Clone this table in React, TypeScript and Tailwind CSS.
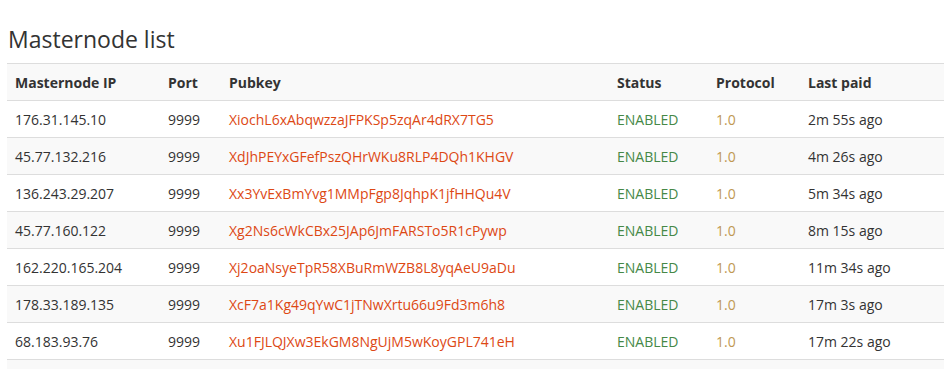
import React from "react";

const rows = [
  ["176.31.145.10", "9999", "XiochL6xAbqwzzaJFPKSp5zqAr4dRX7TG5", "2m 55s ago"],
  ["45.77.132.216", "9999", "XdJhPEYxGFefPszQHrWKu8RLP4DQh1KHGV", "4m 26s ago"],
  ["136.243.29.207", "9999", "Xx3YvExBmYvg1MMpFgp8JqhpK1jfHHQu4V", "5m 34s ago"],
  ["45.77.160.122", "9999", "Xg2Ns6cWkCBx25JAp6JmFARSTo5R1cPywp", "8m 15s ago"],
  ["162.220.165.204", "9999", "Xj2oaNsyeTpR58XBuRmWZB8L8yqAeU9aDu", "11m 34s ago"],
  ["178.33.189.135", "9999", "XcF7a1Kg49qYwC1jTNwXrtu66u9Fd3m6h8", "17m 3s ago"],
  ["68.183.93.76", "9999", "Xu1FJLQJXw3EkGM8NgUjM5wKoyGPL741eH", "17m 22s ago"],
];

export default function App() {
  return (
    <div
      className="w-[944px] h-[369px] overflow-hidden bg-white text-[#333] pl-[7px]"
      style={{ fontFamily: '"Open Sans", "Noto Sans", sans-serif' }}
    >
      <h1 className="text-[23px] leading-[28px] pt-[25px] pb-[10px] pl-[1px] font-normal text-[#333]">
        Masternode list
      </h1>
      <table className="w-full border-collapse text-[14px] border-t border-[#ddd]">
        <thead>
          <tr className="bg-[#f9f9f9] h-[37px] border-b border-[#ddd]">
            <th className="text-left font-bold px-2 w-[153px]">Masternode IP</th>
            <th className="text-left font-bold px-2 w-[61px]">Port</th>
            <th className="text-left font-bold px-2 w-[388px]">Pubkey</th>
            <th className="text-left font-bold px-2 w-[99px]">Status</th>
            <th className="text-left font-bold px-2 w-[92px]">Protocol</th>
            <th className="text-left font-bold px-2">Last paid</th>
          </tr>
        </thead>
        <tbody>
          {rows.map((r, i) => (
            <tr
              key={i}
              className={`h-[37px] border-b border-[#ddd] ${i % 2 === 1 ? "bg-[#f9f9f9]" : "bg-white"}`}
            >
              <td className="px-2">{r[0]}</td>
              <td className="px-2">{r[1]}</td>
              <td className="px-2 text-[#dd4814]">{r[2]}</td>
              <td className="px-2 text-[#468847]">ENABLED</td>
              <td className="px-2 text-[#c09853]">1.0</td>
              <td className="px-2">{r[3]}</td>
            </tr>
          ))}
          <tr className="h-[37px] bg-[#f9f9f9]">
            <td colSpan={6}></td>
          </tr>
        </tbody>
      </table>
    </div>
  );
}
